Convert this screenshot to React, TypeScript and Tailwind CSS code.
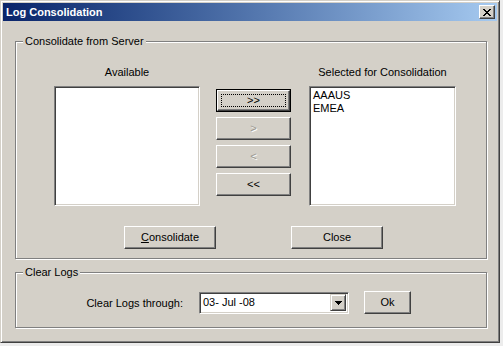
import React from "react";

const font = { fontFamily: '"Liberation Sans", Arial, sans-serif' };

function Btn({
  children,
  w,
  h = 23,
  def = false,
  disabled = false,
}: {
  children: React.ReactNode;
  w: string;
  h?: number;
  def?: boolean;
  disabled?: boolean;
}) {
  const inner = (
    <div
      className={
        "relative flex h-full w-full items-center justify-center bg-[#D4D0C8] border border-t-white border-l-white border-r-[#404040] border-b-[#404040] shadow-[inset_-1px_-1px_0_#808080] text-[11px] leading-none " +
        (disabled ? "text-[#9a9890] [text-shadow:1px_1px_0_#fff]" : "text-black")
      }
    >
      {def && <span className="absolute inset-[3px] border border-dotted border-black" />}
      {children}
    </div>
  );
  return (
    <div className={w + " " + (def ? "border border-black" : "")} style={{ height: h }}>
      {inner}
    </div>
  );
}

function Group({
  label,
  className,
  children,
}: {
  label: string;
  className: string;
  children: React.ReactNode;
}) {
  return (
    <div
      className={
        "relative ml-[12px] w-[472px] border border-[#808080] shadow-[inset_1px_1px_0_#fff,1px_1px_0_#fff] " +
        className
      }
    >
      <span className="absolute left-[7px] top-[-8px] bg-[#D4D0C8] px-[2px] text-[11px] leading-[14px] text-black">
        {label}
      </span>
      {children}
    </div>
  );
}

const sunken =
  "bg-white border border-t-[#808080] border-l-[#808080] border-r-white border-b-white shadow-[inset_1px_1px_0_#404040,inset_-1px_-1px_0_#D4D0C8]";

export default function App() {
  return (
    <div className="h-[346px] w-[503px] bg-[#ECECEC]" style={font}>
      <div className="h-[343px] w-[500px] bg-[#D4D0C8] border border-t-[#D4D0C8] border-l-[#D4D0C8] border-r-[#404040] border-b-[#404040] shadow-[inset_1px_1px_0_#fff,inset_-1px_-1px_0_#808080] p-[2px]">
        {/* Title bar */}
        <div className="flex h-[18px] items-center justify-between bg-gradient-to-r from-[#0A246A] to-[#A6CAF0] pl-[3px] pr-[2px]">
          <span className="text-[11px] font-bold leading-none text-white">Log Consolidation</span>
          <div className="flex h-[14px] w-[16px] items-center justify-center bg-[#D4D0C8] border border-t-white border-l-white border-r-[#404040] border-b-[#404040] shadow-[inset_-1px_-1px_0_#808080]">
            <svg width="8" height="7" viewBox="0 0 8 7" shapeRendering="crispEdges">
              <path
                d="M0 0h2v1H0zM6 0h2v1H6zM1 1h2v1H1zM5 1h2v1H5zM2 2h4v1H2zM3 3h2v1H3zM2 4h4v1H2zM1 5h2v1H1zM5 5h2v1H5zM0 6h2v1H0zM6 6h2v1H6z"
                fill="#000"
              />
            </svg>
          </div>
        </div>

        {/* Group 1 */}
        <div className="pt-[20px]">
          <Group label="Consolidate from Server" className="h-[218px]">
            <div className="pl-[38px] pt-[23px]">
              <div className="flex text-[11px] leading-[14px]">
                <div className="w-[146px] text-center">Available</div>
                <div className="ml-[109px] w-[147px] text-center">Selected for Consolidation</div>
              </div>
              <div className="mt-[7px] flex">
                <div className={sunken + " h-[120px] w-[146px]"} />
                <div className="ml-[16px] mt-[3px] flex flex-col gap-[5px]">
                  <Btn w="w-[75px]" def>
                    &gt;&gt;
                  </Btn>
                  <Btn w="w-[75px]" disabled>
                    &gt;
                  </Btn>
                  <Btn w="w-[75px]" disabled>
                    &lt;
                  </Btn>
                  <Btn w="w-[75px]">&lt;&lt;</Btn>
                </div>
                <div className={sunken + " ml-[18px] h-[120px] w-[147px] px-[3px] pt-[2px] text-[11px] leading-[13px]"}>
                  <div>AAAUS</div>
                  <div>EMEA</div>
                </div>
              </div>
            </div>
            <div className="mt-[20px] flex pl-[108px]">
              <Btn w="w-[92px]">
                <span>
                  <span className="underline">C</span>onsolidate
                </span>
              </Btn>
              <div className="ml-[75px]">
                <Btn w="w-[92px]">Close</Btn>
              </div>
            </div>
          </Group>
        </div>

        {/* Group 2 */}
        <div className="pt-[13px]">
          <Group label="Clear Logs" className="h-[56px]">
            <div className="flex items-center pt-[18px]">
              <div className="w-[167px] text-right text-[11px] leading-[14px]">Clear Logs through:</div>
              <div className={sunken + " ml-[16px] flex h-[22px] w-[150px] items-center justify-between pl-[3px] pr-[2px]"}>
                <span className="text-[11px] leading-none">03- Jul -08</span>
                <div className="flex h-[17px] w-[16px] items-center justify-center bg-[#D4D0C8] border border-t-[#D4D0C8] border-l-[#D4D0C8] border-r-[#404040] border-b-[#404040] shadow-[inset_1px_1px_0_#fff,inset_-1px_-1px_0_#808080]">
                  <svg width="7" height="4" viewBox="0 0 7 4" shapeRendering="crispEdges">
                    <path d="M0 0h7v1H0zM1 1h5v1H1zM2 2h3v1H2zM3 3h1v1H3z" fill="#000" />
                  </svg>
                </div>
              </div>
              <div className="ml-[15px]">
                <Btn w="w-[47px]">Ok</Btn>
              </div>
            </div>
          </Group>
        </div>
      </div>
    </div>
  );
}
